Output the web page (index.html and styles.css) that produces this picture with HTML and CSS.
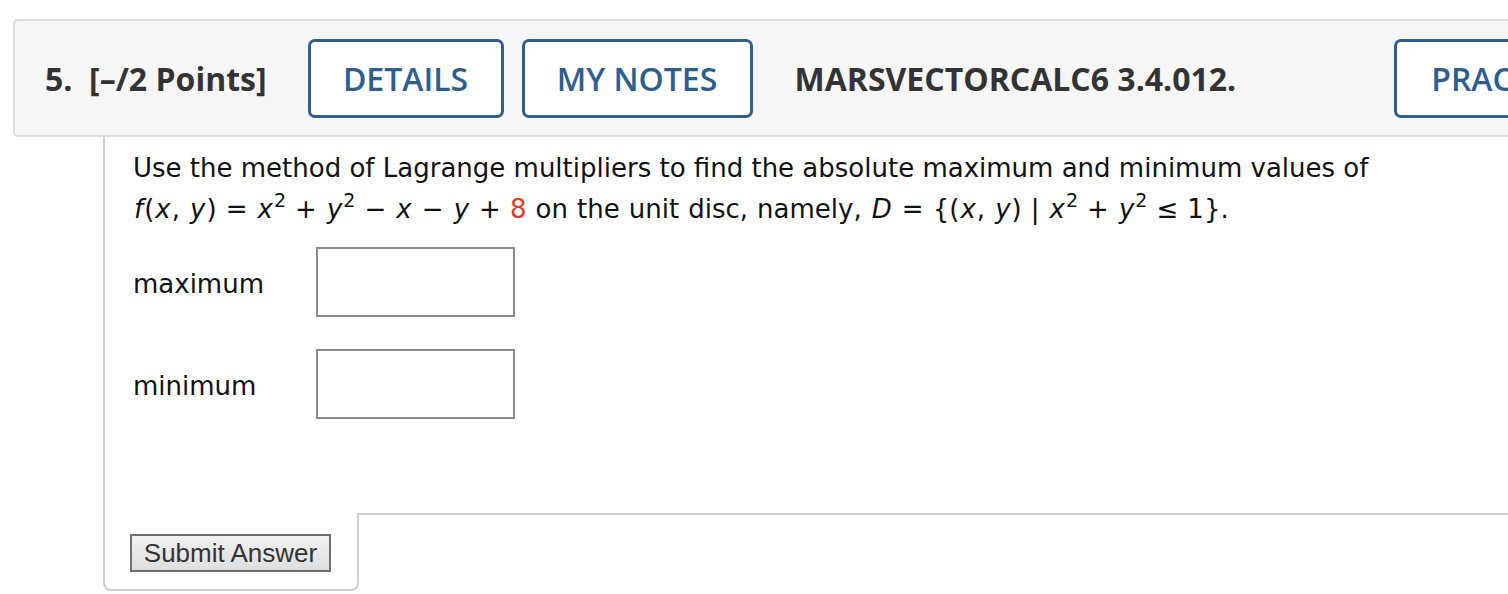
FILE: index.html
```html
<!DOCTYPE html>
<html>
<head>
<meta charset="utf-8">
<link rel="stylesheet" href="styles.css">
</head>
<body>
<div class="question">
  <div class="qhead">
    <span class="qnum">5.&nbsp; [–/2 Points]</span>
    <button class="hbtn details">DETAILS</button>
    <button class="hbtn notes">MY NOTES</button>
    <span class="qcode">MARSVECTORCALC6 3.4.012.</span>
    <button class="hbtn practice">PRACTICE ANOTHER</button>
  </div>
  <div class="qwrap">
    <div class="qbody">
      <p class="prompt">Use the method of Lagrange multipliers to find the absolute maximum and minimum values of<br><span class="math-line"><i>f</i>(<i>x</i>, <i>y</i>) = <i>x</i><sup>2</sup> + <i>y</i><sup>2</sup> − <i>x</i> − <i>y</i> + <span class="red">8</span> on the unit disc, namely, <i>D</i> = {(<i>x</i>, <i>y</i>) | <i>x</i><sup>2</sup> + <i>y</i><sup>2</sup> ≤ 1}.</span></p>
      <div class="answer-row">
        <span class="label">maximum</span>
        <input class="ans" type="text">
      </div>
      <div class="answer-row">
        <span class="label">minimum</span>
        <input class="ans" type="text">
      </div>
    </div>
    <div class="qfoot">
      <div class="submit-cell">
        <button class="submit">Submit Answer</button>
      </div>
      <div class="foot-rest"></div>
    </div>
  </div>
</div>
</body>
</html>
```

FILE: styles.css
```css
html, body {
  margin: 0;
  padding: 0;
  background: #fff;
  overflow: hidden;
}

.question {
  margin: 19px 0 0 13px;
  width: 1700px;
}

.qhead {
  display: flex;
  align-items: center;
  background: #f6f6f6;
  border: 2px solid #dedede;
  border-radius: 5px;
  padding: 18px 0 17px 30px;
  font-family: "Open Sans", sans-serif;
  color: #333;
}

.qhead > * {
  flex-shrink: 0;
}

.qnum, .qcode {
  font-size: 32px;
  font-weight: 700;
  white-space: nowrap;
}

.qnum {
  margin-right: 41px;
}

.qcode {
  margin-left: 42px;
}

.hbtn {
  height: 79px;
  box-sizing: border-box;
  border: 3px solid #2f5f8f;
  border-radius: 7px;
  background: #fff;
  color: #2e5e8e;
  font-family: "Open Sans", sans-serif;
  font-size: 32px;
  font-weight: 600;
  padding: 0 34px;
  white-space: nowrap;
}

.details {
  width: 196px;
  padding: 0;
}

.notes {
  width: 231px;
  padding: 0;
  margin-left: 18px;
}

.practice {
  margin-left: 158px;
  padding: 0 34px;
}

.qwrap {
  margin-left: 90px;
}

.qbody {
  border-left: 2px solid #cfcfcf;
  padding: 11px 0 94px 28px;
  font-family: "DejaVu Sans", Verdana, sans-serif;
  font-size: 26px;
  color: #111;
}

.prompt {
  margin: 0 0 17px 0;
  line-height: 41px;
  white-space: nowrap;
}

.math-line {
  word-spacing: 0.8px;
}

.math-line i {
  margin: 0 1px;
}

.prompt sup {
  font-size: 19px;
  line-height: 0;
  vertical-align: 11px;
}

.red {
  color: #e23b2e;
}

.answer-row {
  display: flex;
  align-items: center;
  height: 70px;
  margin-bottom: 32px;
}

.answer-row:last-child {
  margin-bottom: 0;
}

.label {
  width: 183px;
  padding-top: 4px;
  flex-shrink: 0;
}

.ans {
  width: 199px;
  height: 70px;
  box-sizing: border-box;
  border: 2px solid #8a8a8a;
  margin: 0;
  padding: 0;
  background: #fff;
}

.qfoot {
  display: flex;
}

.submit-cell {
  width: 256px;
  flex-shrink: 0;
  box-sizing: border-box;
  border: 2px solid #cfcfcf;
  border-top: none;
  border-radius: 0 0 8px 8px;
  padding: 21px 25px 17px 25px;
}

.foot-rest {
  flex: 1;
  border-top: 2px solid #cfcfcf;
}

.submit {
  display: block;
  width: 201px;
  height: 38px;
  box-sizing: border-box;
  border: 2px solid #707070;
  background: linear-gradient(#f2f2f2, #dedede);
  font-family: "Liberation Sans", Arial, sans-serif;
  font-size: 26px;
  color: #333;
  padding: 0;
}
```
